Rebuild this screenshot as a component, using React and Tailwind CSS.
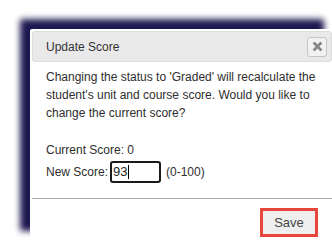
export default function App() {
  const font = { fontFamily: '"Liberation Sans", Arial, sans-serif' };
  return (
    <div className="w-[332px] h-[245px] overflow-hidden bg-white" style={font}>
      <div className="ml-[30px] mt-[29px] w-[304px] h-[212px] bg-white p-[2px] rounded-[2px] shadow-[-10px_-10px_6px_#1e1850] flex flex-col">
        <div className="h-[31px] shrink-0 border border-[#dddddd] bg-[#e9e9e9] rounded-[3px] flex items-center justify-between pl-[13px] pr-[4px]">
          <span className="text-[12px] text-[#333333]">Update Score</span>
          <button className="w-[20px] h-[20px] border border-[#c5c5c5] bg-[#f2f2f2] rounded-[3px] flex items-center justify-center">
            <svg width="11" height="11" viewBox="0 0 11 11">
              <path d="M1.6 1.6 L9.4 9.4 M9.4 1.6 L1.6 9.4" stroke="#888888" strokeWidth="2.8" fill="none" />
            </svg>
          </button>
        </div>
        <div className="px-[14px] pt-[6px] text-[12px] leading-[18px] text-[#2e2e2e]">
          <p>Changing the status to 'Graded' will recalculate the student's unit and course score. Would you like to change the current score?</p>
          <p className="mt-[19px]">Current Score: 0</p>
          <div className="mt-[2px] h-[22px] flex items-center">
            <span>New Score:</span>
            <div className="ml-[2px] w-[51px] h-[22px] border-2 border-[#1a1a1a] rounded-[3px] flex items-center pl-[1px] text-[13px] text-[#222222]">
              <span>93</span>
              <span className="w-px h-[14px] bg-black"></span>
            </div>
            <span className="ml-[5px]">(0-100)</span>
          </div>
        </div>
        <div className="mt-[15px] border-t border-[#aaaaaa] pt-[9px] pr-[14px] flex justify-end">
          <div className="shrink-0 border-[3px] border-[#e8453c] w-[58px] h-[29px]">
            <button className="w-full h-full bg-[#eeeeee] text-[13px] text-[#454545] flex items-center justify-center">
              Save
            </button>
          </div>
        </div>
      </div>
    </div>
  );
}
